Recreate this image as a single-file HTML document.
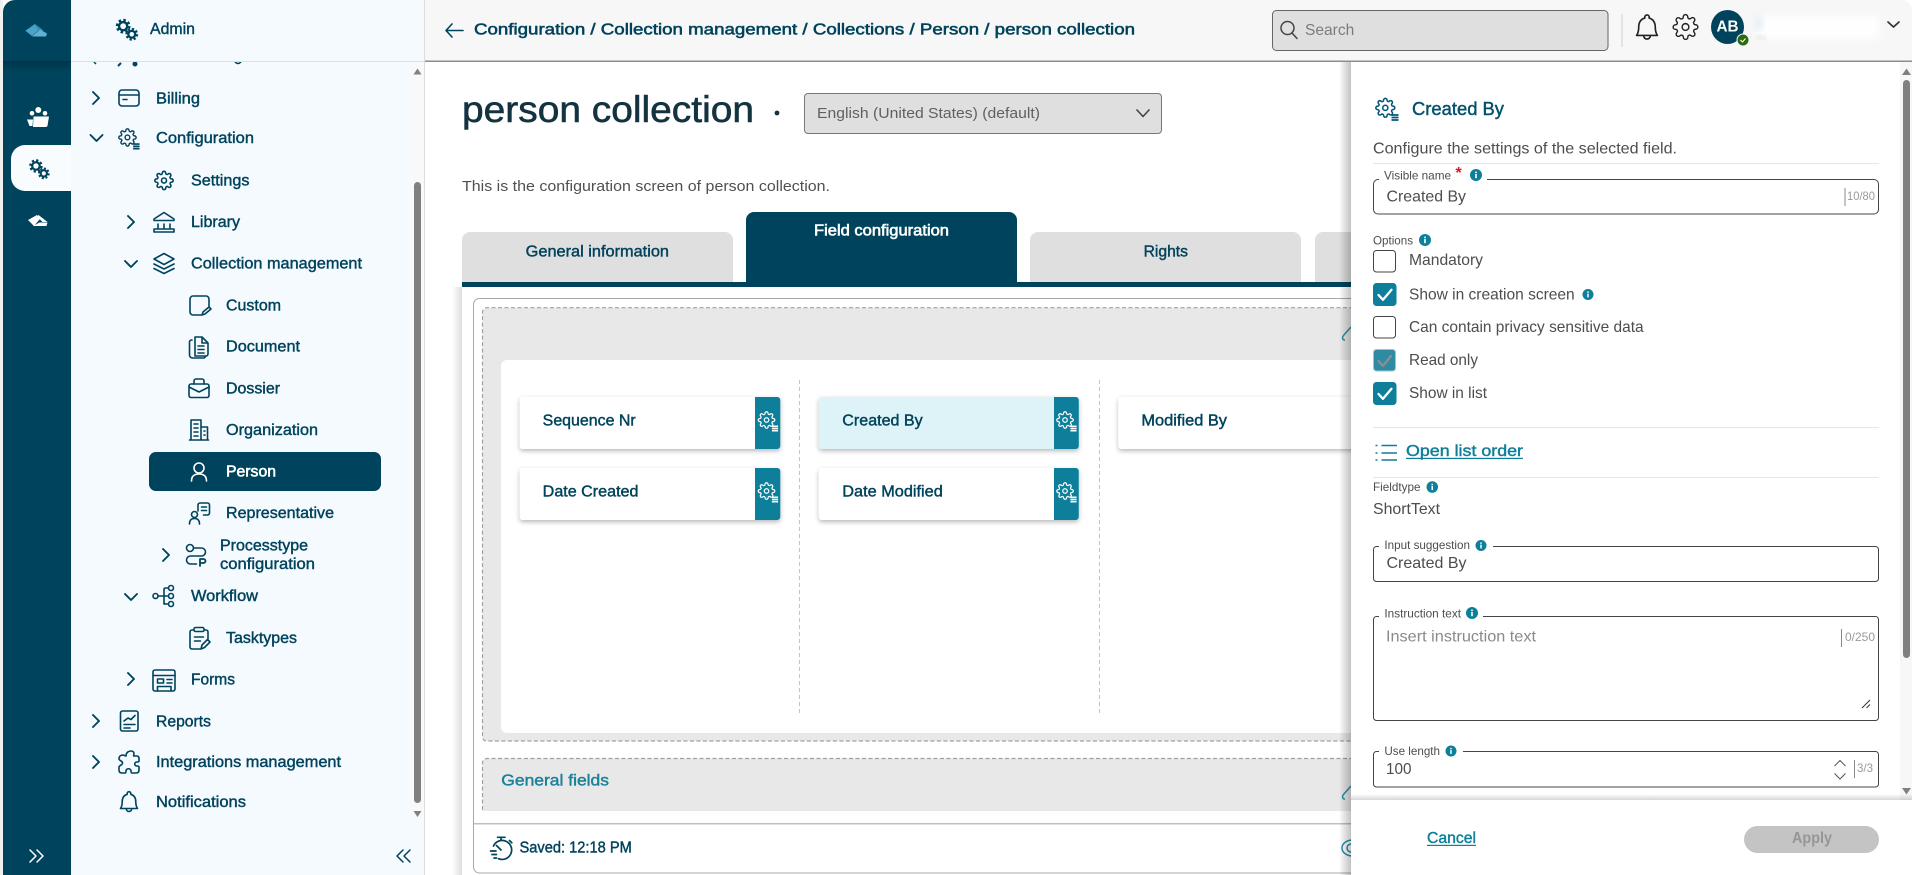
<!DOCTYPE html>
<html lang="en">
<head>
<meta charset="utf-8">
<title>person collection</title>
<style>
html,body{margin:0;padding:0;background:#fff;width:1915px;height:875px;overflow:hidden}
svg{display:block}
text{font-family:"Liberation Sans",sans-serif;white-space:pre}
.a{font-size:16px;fill:#00435c;stroke:#00435c;stroke-width:.42}
.w{font-size:16px;fill:#fff;stroke:#fff;stroke-width:.6}
.g{font-size:16px;fill:#4d4d4d}
.s{font-size:12px;fill:#4d4d4d}
.c{font-size:12px;fill:#9a9a9a}
.i{fill:none;stroke:#00435c;stroke-width:1.6;stroke-linecap:round;stroke-linejoin:round}
.ib{fill:none;stroke:#00435c;stroke-width:1.9;stroke-linecap:round;stroke-linejoin:round}
.bx{fill:#fff;stroke:#444;stroke-width:1}
</style>
</head>
<body>
<svg width="1915" height="875" viewBox="0 0 1915 875" xmlns="http://www.w3.org/2000/svg">
<defs>
<symbol id="gear" viewBox="0 0 24 24" overflow="visible">
<g fill="none" stroke-linecap="round" stroke-linejoin="round">
<circle cx="12" cy="12" r="3"/>
<path d="M19.4 15a1.65 1.65 0 00.33 1.82l.06.06a2 2 0 010 2.83 2 2 0 01-2.83 0l-.06-.06a1.65 1.65 0 00-1.82-.33 1.65 1.65 0 00-1 1.51V21a2 2 0 01-2 2 2 2 0 01-2-2v-.09A1.65 1.65 0 009 19.4a1.65 1.65 0 00-1.82.33l-.06.06a2 2 0 01-2.83 0 2 2 0 010-2.83l.06-.06a1.65 1.65 0 00.33-1.82 1.65 1.65 0 00-1.51-1H3a2 2 0 01-2-2 2 2 0 012-2h.09A1.65 1.65 0 004.6 9a1.65 1.65 0 00-.33-1.82l-.06-.06a2 2 0 010-2.83 2 2 0 012.83 0l.06.06a1.65 1.65 0 001.82.33H9a1.65 1.65 0 001-1.51V3a2 2 0 012-2 2 2 0 012 2v.09a1.65 1.65 0 001 1.51 1.65 1.65 0 001.82-.33l.06-.06a2 2 0 012.83 0 2 2 0 010 2.83l-.06.06a1.65 1.65 0 00-.33 1.82V9a1.65 1.65 0 001.51 1H21a2 2 0 012 2 2 2 0 01-2 2h-.09a1.65 1.65 0 00-1.51 1z"/>
</g>
</symbol>
<symbol id="cfg" viewBox="0 0 24 24" overflow="visible">
<g transform="scale(.86)"><use href="#gear" width="24" height="24"/></g>
<path d="M16.5 17.5h7M16.5 20h7M16.5 22.5h7" fill="none" stroke-width="1.8"/>
</symbol>
<symbol id="gears" viewBox="0 0 24 24" overflow="visible">
<g fill="none">
<circle cx="8.500" cy="8.500" r="4.300" stroke-width="2.500"/>
<circle cx="8.500" cy="8.500" r="6.400" stroke-width="2.600" stroke-dasharray="2.600 2.430"/>
<circle cx="17.500" cy="17" r="3.600" stroke-width="2.400"/>
<circle cx="17.500" cy="17" r="5.500" stroke-width="2.400" stroke-dasharray="2.300 2"/>
</g>
</symbol>
<symbol id="info" viewBox="0 0 12 12">
<circle cx="6" cy="6" r="6" fill="#0e7f9a"/>
<rect x="5.200" y="5" width="1.600" height="4.200" fill="#fff"/>
<rect x="5.200" y="2.600" width="1.600" height="1.600" fill="#fff"/>
</symbol>
<symbol id="bell" viewBox="0 0 18 22" overflow="visible">
<path fill="none" stroke-linecap="round" stroke-linejoin="round" d="M9 .7a1.800 1.800 0 0 0-1.800 1.800v.8C3.500 4.300 2.200 7 2.200 11c0 3.700-.7 5-1.700 6.500h17c-1-1.500-1.700-2.800-1.700-6.500 0-4-1.300-6.700-5-7.700v-.8A1.800 1.800 0 0 0 9 .7zM6.300 17.800a2.700 2.700 0 0 0 5.400 0"/>
</symbol>
<symbol id="chk" viewBox="0 0 24 23">
<rect x=".5" y=".5" width="22.500" height="22" rx="3" fill="#0e7f9a" stroke="#0e7f9a"/>
<path d="M5.500 12l4.500 4.800 8.500-10" fill="none" stroke="#fff" stroke-width="2.300" stroke-linecap="round" stroke-linejoin="round"/>
</symbol>
<linearGradient id="ps" x1="0" x2="1" y1="0" y2="0"><stop offset="0" stop-color="#000" stop-opacity="0"/><stop offset="1" stop-color="#000" stop-opacity=".24"/></linearGradient>
<linearGradient id="ls" x1="0" x2="1" y1="0" y2="0"><stop offset="0" stop-color="#000" stop-opacity="0"/><stop offset="1" stop-color="#000" stop-opacity=".13"/></linearGradient>
<linearGradient id="fs" x1="0" x2="0" y1="0" y2="1"><stop offset="0" stop-color="#000" stop-opacity="0"/><stop offset="1" stop-color="#000" stop-opacity=".16"/></linearGradient>
<linearGradient id="rs" x1="0" x2="0" y1="0" y2="1"><stop offset="0" stop-color="#000" stop-opacity=".22"/><stop offset="1" stop-color="#000" stop-opacity="0"/></linearGradient>
<filter id="cs" x="-10%" y="-20%" width="120%" height="150%"><feDropShadow dx="0" dy="2" stdDeviation="2.500" flood-color="#000" flood-opacity=".28"/></filter>
<filter id="bl" x="-10%" y="-50%" width="120%" height="200%"><feGaussianBlur stdDeviation="3"/></filter>
</defs>

<!-- base -->
<rect width="1915" height="875" fill="#fff"/>

<!-- main content -->
<text x="462" y="122" font-size="37" fill="#12333f" stroke="#12333f" stroke-width=".6" textLength="292" lengthAdjust="spacingAndGlyphs">person collection</text>
<circle cx="777" cy="113" r="2.400" fill="#12333f"/>
<rect x="804.500" y="93.500" width="357" height="40" rx="3.500" fill="#dfdfdf" stroke="#777"/>
<text x="817" y="118" class="g" style="font-size:15px;fill:#606060" textLength="223" lengthAdjust="spacingAndGlyphs">English (United States) (default)</text>
<path d="M1137 110l6 6.500 6-6.500" fill="none" stroke="#444" stroke-width="1.600" stroke-linecap="round" stroke-linejoin="round"/>
<text x="462" y="191" class="g" style="font-size:15px;fill:#505050" textLength="368" lengthAdjust="spacingAndGlyphs">This is the configuration screen of person collection.</text>

<!-- tabs -->
<path d="M462 282v-42a8 8 0 0 1 8-8h255a8 8 0 0 1 8 8v42z" fill="#dfdfdf"/>
<path d="M746 282v-62a8 8 0 0 1 8-8h255a8 8 0 0 1 8 8v62z" fill="#00435c"/>
<path d="M1030 282v-42a8 8 0 0 1 8-8h255a8 8 0 0 1 8 8v42z" fill="#dfdfdf"/>
<path d="M1315 282v-42a8 8 0 0 1 8-8h40v50z" fill="#dfdfdf"/>
<text x="525.700" y="256.700" class="a" style="font-size:15.500px" textLength="143.300" lengthAdjust="spacingAndGlyphs">General information</text>
<text x="814" y="235.700" class="w" style="font-size:15.500px" textLength="135" lengthAdjust="spacingAndGlyphs">Field configuration</text>
<text x="1143.600" y="256.700" class="a" style="font-size:15.500px" textLength="44.400" lengthAdjust="spacingAndGlyphs">Rights</text>
<rect x="452" y="287" width="10" height="588" fill="url(#ls)"/>
<rect x="462" y="282" width="900" height="5" fill="#00435c"/>

<!-- content box -->
<path d="M1360 298.500H479a6 6 0 0 0-5.500 6V867a6 6 0 0 0 6 6H1360" fill="#fff" stroke="#a8a8a8"/>
<path d="M1360 307.700H487a4.500 4.500 0 0 0-4.500 4.500V737a4 4 0 0 0 4 4H1360z" fill="#e8e8e8" stroke="#a0a0a0" stroke-width="1.200" stroke-dasharray="4 2.500"/>
<path d="M1360 360H507a6 6 0 0 0-6 6V727a6 6 0 0 0 6 6H1360z" fill="#fff"/>
<path d="M799.500 380V713M1099.500 380V713" stroke="#c4c4c4" stroke-dasharray="4 3" fill="none"/>

<g filter="url(#cs)"><rect x="519.700" y="397" width="260.600" height="52" rx="3" fill="#fff"/></g>
<path d="M755 397h22.300a3 3 0 0 1 3 3v46a3 3 0 0 1-3 3H755z" fill="#0e7f9a"/>
<use href="#cfg" x="757" y="411" width="22" height="21" stroke="#fff" stroke-width="1.600"/>
<text x="542.700" y="425.700" class="a" style="font-size:15.500px" textLength="93" lengthAdjust="spacingAndGlyphs">Sequence Nr</text>

<g filter="url(#cs)"><rect x="519.700" y="468" width="260.600" height="52" rx="3" fill="#fff"/></g>
<path d="M755 468h22.300a3 3 0 0 1 3 3v46a3 3 0 0 1-3 3H755z" fill="#0e7f9a"/>
<use href="#cfg" x="757" y="482" width="22" height="21" stroke="#fff" stroke-width="1.600"/>
<text x="542.700" y="496.700" class="a" style="font-size:15.500px" textLength="95.800" lengthAdjust="spacingAndGlyphs">Date Created</text>

<g filter="url(#cs)"><rect x="818.800" y="397" width="260" height="52" rx="3" fill="#def3f7"/></g>
<path d="M1054 397h21.800a3 3 0 0 1 3 3v46a3 3 0 0 1-3 3H1054z" fill="#0e7f9a"/>
<use href="#cfg" x="1055.500" y="411" width="22" height="21" stroke="#fff" stroke-width="1.600"/>
<text x="842.300" y="425.700" class="a" style="font-size:15.500px" textLength="80.400" lengthAdjust="spacingAndGlyphs">Created By</text>

<g filter="url(#cs)"><rect x="818.800" y="468" width="260" height="52" rx="3" fill="#fff"/></g>
<path d="M1054 468h21.800a3 3 0 0 1 3 3v46a3 3 0 0 1-3 3H1054z" fill="#0e7f9a"/>
<use href="#cfg" x="1055.500" y="482" width="22" height="21" stroke="#fff" stroke-width="1.600"/>
<text x="842.300" y="496.700" class="a" style="font-size:15.500px" textLength="100.500" lengthAdjust="spacingAndGlyphs">Date Modified</text>

<g filter="url(#cs)"><rect x="1118.400" y="397" width="270" height="52" rx="3" fill="#fff"/></g>
<text x="1141.400" y="425.700" class="a" style="font-size:15.500px" textLength="85.600" lengthAdjust="spacingAndGlyphs">Modified By</text>

<path d="M1343 336l8-9" stroke="#2b8ea6" stroke-width="1.500" fill="none"/>
<path d="M1343 336q-1.500 4 2 4" stroke="#2b8ea6" stroke-width="1.500" fill="none"/>

<!-- general fields -->
<path d="M1360 758.500H487a4.500 4.500 0 0 0-4.500 4.500V811H1360z" fill="#e8e8e8"/>
<path d="M1360 758.500H487a4.500 4.500 0 0 0-4.500 4.500V811" fill="none" stroke="#a0a0a0" stroke-width="1.200" stroke-dasharray="4 2.500"/>
<rect x="505" y="811" width="860" height="2" fill="#fff"/>
<text x="501.300" y="785.700" class="a" style="font-size:15.500px;fill:#1a8199;stroke:#1a8199" textLength="107.700" lengthAdjust="spacingAndGlyphs">General fields</text>
<path d="M1343 795l8-9" stroke="#2b8ea6" stroke-width="1.500" fill="none"/>
<path d="M1343 795q-1.500 4 2 4" stroke="#2b8ea6" stroke-width="1.500" fill="none"/>

<rect x="474" y="823" width="890" height="1.500" fill="#c0c0c0"/>
<g class="i" style="stroke-width:1.700">
<path d="M493.500 846a9.500 9.500 0 1 1 5 12.700M497.500 837.300h7.500M501 837.500v3M509.500 840.500l2.300 2.300M501 850l-4.500-4.500M490.500 851h5.500M492 854.500h4.500M494 858h2.500"/>
</g>
<text x="519.500" y="852.700" class="a" style="font-size:15.500px" textLength="112.300" lengthAdjust="spacingAndGlyphs">Saved: 12:18 PM</text>
<path d="M1351 840a12 8 0 0 0-9 8 12 8 0 0 0 9 8" stroke="#2b8ea6" stroke-width="1.500" fill="none"/>
<circle cx="1351" cy="848" r="4" fill="none" stroke="#2b8ea6" stroke-width="1.500"/>

<!-- header -->
<path d="M424 0H1902a10 10 0 0 1 10 10V61H424z" fill="#f7f7f7"/>
<rect x="424" y="60.500" width="1488" height="1.500" fill="#8c8c8c"/>
<path d="M463 30.500H446M452 24l-6 6.500 6 6.500" fill="none" stroke="#00435c" stroke-width="1.600" stroke-linecap="round" stroke-linejoin="round"/>
<text x="474" y="34.700" class="a" style="stroke-width:.55" textLength="661" lengthAdjust="spacingAndGlyphs">Configuration / Collection management / Collections / Person / person collection</text>
<rect x="1272.500" y="10.500" width="335.500" height="40" rx="4" fill="#dfdfdf" stroke="#666"/>
<circle cx="1287.500" cy="28" r="6.500" fill="none" stroke="#444" stroke-width="1.500"/>
<path d="M1292 33l5 5.500" stroke="#444" stroke-width="1.500" fill="none" stroke-linecap="round"/>
<text x="1305" y="35" class="g" style="fill:#7c7c7c" textLength="49.300" lengthAdjust="spacingAndGlyphs">Search</text>
<rect x="1621.500" y="14" width="1" height="33" fill="#cfcfcf"/>
<use href="#bell" x="1636" y="14" width="22" height="27" stroke="#222" stroke-width="1.350"/>
<use href="#gear" x="1672" y="13" width="27" height="28" stroke="#222" stroke-width="1.250"/>
<ellipse cx="1727.500" cy="27" rx="16.500" ry="17" fill="#00435c"/>
<text x="1716.500" y="31.700" font-size="16" font-weight="bold" fill="#fff" textLength="22" lengthAdjust="spacingAndGlyphs">AB</text>
<circle cx="1743" cy="40" r="6" fill="#2b6b10" stroke="#f7f7f7" stroke-width="1"/>
<path d="M1740.500 40l2 2 3-3.500" stroke="#fff" stroke-width="1.100" fill="none"/>
<rect x="1757" y="16" width="122" height="23" fill="#ffffff" opacity=".9" filter="url(#bl)"/>
<rect x="1754" y="16" width="10" height="14" fill="#e4eef8" opacity=".8" filter="url(#bl)"/>
<rect x="1756" y="36" width="10" height="3" fill="#c4d8b0" opacity=".7" filter="url(#bl)"/>
<path d="M1888 22l5.500 5 5.500-5" fill="none" stroke="#333" stroke-width="1.700" stroke-linecap="round" stroke-linejoin="round"/>

<!-- drawer -->
<rect x="1339" y="62" width="12" height="813" fill="url(#ps)"/>
<rect x="1351" y="62" width="561" height="813" fill="#fff"/>
<rect x="1900" y="62" width="12" height="738" fill="#f7f7f7"/>
<path d="M1906.500 68.500l4.500 6.500h-9z" fill="#808080"/>
<rect x="1903" y="80" width="7" height="578" rx="3.500" fill="#808080"/>
<path d="M1906.500 794.500l-4.500-6.500h9z" fill="#808080"/>

<use href="#cfg" x="1375" y="97" width="24" height="25" stroke="#00567a" stroke-width="1.800"/>
<text x="1412" y="115" class="a" style="font-size:18px;fill:#00506e;stroke:#00506e" textLength="92" lengthAdjust="spacingAndGlyphs">Created By</text>
<text x="1373" y="153.300" class="g" textLength="304" lengthAdjust="spacingAndGlyphs">Configure the settings of the selected field.</text>
<rect x="1373" y="163" width="506" height="1" fill="#e6e6e6"/>

<!-- visible name -->
<rect x="1373.500" y="179.500" width="505" height="34.500" rx="4.500" class="bx"/>
<rect x="1379" y="176" width="108" height="7" fill="#fff"/>
<text x="1384" y="179.300" class="s" textLength="67" lengthAdjust="spacingAndGlyphs">Visible name</text>
<text x="1455.500" y="178" font-size="16" fill="#e0112b" font-weight="bold">*</text>
<use href="#info" x="1470" y="169" width="12" height="12"/>
<text x="1386.500" y="201.300" class="g" textLength="79.500" lengthAdjust="spacingAndGlyphs">Created By</text>
<rect x="1844.500" y="188" width="1" height="18" fill="#888"/>
<text x="1847" y="200" class="c" textLength="28" lengthAdjust="spacingAndGlyphs">10/80</text>

<!-- options -->
<text x="1373" y="244.300" class="s" textLength="40" lengthAdjust="spacingAndGlyphs">Options</text>
<use href="#info" x="1419" y="234" width="12" height="12"/>
<rect x="1373.500" y="250.500" width="22" height="21.500" rx="3" class="bx"/>
<text x="1409" y="265" class="g" textLength="74" lengthAdjust="spacingAndGlyphs">Mandatory</text>
<use href="#chk" x="1373" y="283" width="24" height="23"/>
<text x="1409" y="299.300" class="g" textLength="165.700" lengthAdjust="spacingAndGlyphs">Show in creation screen</text>
<use href="#info" x="1582.500" y="289" width="11" height="11"/>
<rect x="1373.500" y="316.500" width="22" height="21.500" rx="3" class="bx"/>
<text x="1409" y="332" class="g" textLength="234.600" lengthAdjust="spacingAndGlyphs">Can contain privacy sensitive data</text>
<rect x="1373.500" y="349.500" width="22" height="21.500" rx="3" fill="#2f8ba1" stroke="#9cc5cf"/>
<path d="M1378.500 361l4.500 4.800 8-9.800" fill="none" stroke="#8b8f90" stroke-width="2.300" stroke-linecap="round" stroke-linejoin="round"/>
<text x="1409" y="364.900" class="g" textLength="69" lengthAdjust="spacingAndGlyphs">Read only</text>
<use href="#chk" x="1373" y="382" width="24" height="23"/>
<text x="1409" y="398" class="g" textLength="78" lengthAdjust="spacingAndGlyphs">Show in list</text>
<rect x="1373" y="427" width="506" height="1" fill="#e6e6e6"/>

<path d="M1381.500 445.500h15.500M1381.500 453h15.500M1381.500 460h15.500M1375.500 445.500h2M1375.500 453h2M1375.500 460h2" stroke="#0e7f9a" stroke-width="1.500" fill="none"/>
<text x="1406" y="456" class="a" style="fill:#0e7f9a;stroke:#0e7f9a" textLength="117" lengthAdjust="spacingAndGlyphs">Open list order</text>
<rect x="1406" y="457.800" width="117" height="1.200" fill="#0e7f9a"/>
<rect x="1373" y="477" width="506" height="1" fill="#e6e6e6"/>

<text x="1373" y="491" class="s" textLength="47.500" lengthAdjust="spacingAndGlyphs">Fieldtype</text>
<use href="#info" x="1426.500" y="481" width="11.500" height="12"/>
<text x="1373" y="514" class="g" textLength="67" lengthAdjust="spacingAndGlyphs">ShortText</text>

<rect x="1373.500" y="546.500" width="505" height="35" rx="3" class="bx"/>
<rect x="1379" y="543" width="114" height="7" fill="#fff"/>
<text x="1384.400" y="549" class="s" textLength="85.600" lengthAdjust="spacingAndGlyphs">Input suggestion</text>
<use href="#info" x="1475.500" y="540" width="11" height="11"/>
<text x="1386.500" y="568" class="g" textLength="80" lengthAdjust="spacingAndGlyphs">Created By</text>

<rect x="1373.500" y="616.500" width="505" height="104" rx="3" class="bx"/>
<rect x="1379" y="613" width="104" height="7" fill="#fff"/>
<text x="1384.400" y="617.300" class="s" textLength="76.600" lengthAdjust="spacingAndGlyphs">Instruction text</text>
<use href="#info" x="1466" y="607" width="12" height="12"/>
<text x="1386" y="641.300" class="g" style="fill:#8a8a8a" textLength="150" lengthAdjust="spacingAndGlyphs">Insert instruction text</text>
<rect x="1841" y="629" width="1" height="18" fill="#888"/>
<text x="1845" y="641" class="c" textLength="30" lengthAdjust="spacingAndGlyphs">0/250</text>
<path d="M1862 708l8-8M1866.500 708l3.500-3.500" stroke="#333" stroke-width="1" fill="none"/>

<rect x="1373.500" y="751.500" width="505" height="35.500" rx="3" class="bx"/>
<rect x="1379" y="748" width="84" height="7" fill="#fff"/>
<text x="1384.400" y="755" class="s" textLength="55.600" lengthAdjust="spacingAndGlyphs">Use length</text>
<use href="#info" x="1445.500" y="745" width="11" height="12"/>
<text x="1386" y="774" class="g" textLength="25.500" lengthAdjust="spacingAndGlyphs">100</text>
<path d="M1834.500 766l5.500-5.500 5.500 5.500M1834.500 773.500l5.500 5.500 5.500-5.500" fill="none" stroke="#555" stroke-width="1"/>
<rect x="1854" y="760" width="1" height="18" fill="#888"/>
<text x="1857" y="772" class="c" textLength="16" lengthAdjust="spacingAndGlyphs">3/3</text>

<!-- drawer footer -->
<rect x="1351" y="794" width="561" height="6" fill="url(#fs)"/>
<rect x="1351" y="800" width="561" height="75" fill="#fff"/>
<text x="1427" y="843" class="a" style="fill:#0e7f9a;stroke:#0e7f9a" textLength="49" lengthAdjust="spacingAndGlyphs">Cancel</text>
<rect x="1427" y="844.800" width="49" height="1.200" fill="#0e7f9a"/>
<rect x="1744" y="826" width="135" height="27" rx="13.500" fill="#c4c4c4"/>
<text x="1792" y="843" font-size="16" font-weight="bold" fill="#969696" textLength="40" lengthAdjust="spacingAndGlyphs">Apply</text>
<rect x="1912" y="62" width="3" height="813" fill="#fff"/>

<!-- sidebar -->
<rect x="71" y="0" width="353" height="875" fill="#f5faff"/>
<rect x="424" y="0" width="1" height="875" fill="#dedede"/>
<rect x="411" y="62" width="13" height="760" fill="#f7f9fb"/>
<path d="M417.500 68.500l4 6h-8z" fill="#808080"/>
<rect x="414" y="182" width="7" height="621" rx="3.500" fill="#808080"/>
<path d="M417.500 817l-4-6h8z" fill="#808080"/>

<!-- partially hidden item -->
<path d="M118 66l3-3" stroke="#00435c" stroke-width="2" fill="none"/>
<circle cx="135" cy="64" r="2.500" fill="#00435c"/>
<path d="M235 62q3 3 6 0M94 62l2 2" stroke="#00435c" stroke-width="1.500" fill="none"/>

<!-- sidebar top -->
<rect x="71" y="0" width="353" height="61" fill="#f5faff"/>
<rect x="71" y="61" width="353" height="1" fill="#cfe6ee"/>
<use href="#gears" x="115" y="18" width="23" height="23" stroke="#00435c"/>
<text x="150" y="34" class="a" textLength="45" lengthAdjust="spacingAndGlyphs">Admin</text>

<!-- chevrons -->
<g class="ib">
<path d="M93 92l6 6-6 6M93 715l6 6-6 6M93 756l6 6-6 6"/>
<path d="M128 216l6 6-6 6M128 673l6 6-6 6"/>
<path d="M163 549l6 6-6 6"/>
<path d="M90.500 135l6 6 6-6"/>
<path d="M125 261l6 6 6-6M125 594l6 6 6-6"/>
</g>

<!-- level items -->
<g class="i">
<rect x="119" y="90" width="20" height="16" rx="3"/><path d="M119 95h20M123 99.500h4"/>
</g>
<use href="#cfg" x="118" y="128" width="22" height="22" stroke="#00435c" stroke-width="1.800"/>
<use href="#gear" x="154" y="170" width="20" height="21" stroke="#00435c" stroke-width="1.900"/>
<g class="i">
<path d="M154 219l10-6.500 10 6.500v1.500h-20zM158 224v5M164 224v5M170 224v5M154 232h20v-3h-20z"/>
<path d="M164 253.500l10 5.500-10 5.500-10-5.500zM154 264l10 5 10-5M154 268.500l10 5 10-5"/>
<path d="M201 315h-8a3 3 0 0 1-3-3v-13a3 3 0 0 1 3-3h13a3 3 0 0 1 3 3v8M202 315l1-3 6-5 2 2-6 5z"/>
<path d="M195 337h7l6 6v11a2 2 0 0 1-2 2h-11zM202 337v6h6M192 340h-.500a2 2 0 0 0-2 2v13a3 3 0 0 0 3 3h11a2 2 0 0 0 2-2M198 346h6M198 349.500h6M198 353h6"/>
<rect x="189" y="384" width="20" height="13.500" rx="2"/><path d="M194 384v-3a2 2 0 0 1 2-2h6a2 2 0 0 1 2 2v3M189 387l10 5 10-5"/>
<path d="M191 440v-20h10v20M201 427h6.500v13M189.500 440h19M194 424h4M194 428h4M194 432h4M194 436h4M204 431h1M204 435h1"/>
<circle cx="194.500" cy="514.500" r="3"/><path d="M189.500 524c0-4 2-5.500 5-5.500s5 1.500 5 5.500M198 511v-6a2 2 0 0 1 2-2h7.500a2 2 0 0 1 2 2v8a2 2 0 0 1-2 2h-4M201.500 507h5M201.500 510.500h5"/>
<circle cx="190" cy="548" r="3.500"/><path d="M193.500 548h8a4 4 0 0 1 0 8h-11a4 4 0 0 0 0 8h6"/><path d="M200 566v-7h3.500a2 2 0 0 1 0 4H200" stroke-width="1.800"/>
<circle cx="155.500" cy="596" r="2.500"/><circle cx="171" cy="588" r="2.500"/><circle cx="171" cy="596" r="2.500"/><circle cx="171" cy="604" r="2.500"/><path d="M158 596h10.500M164 604v-14.500q0-1.500 1.500-1.500h3M164 602q0 2 1.500 2h3"/>
<path d="M193 630h-1a2 2 0 0 0-2 2v15a2 2 0 0 0 2 2h8M204.500 630h1.500a2 2 0 0 1 2 2v7M194.500 637h9M194.500 641h6M201 649l1-4 5.500-5.500 2.500 2.500-5.500 5.500z"/><rect x="194" y="627.500" width="10" height="4" rx="1.500"/>
<rect x="153" y="670" width="22" height="21" rx="2"/><path d="M153 675.500h22"/><rect x="157.500" y="679" width="6" height="4"/><path d="M167 679.500h5M167 683h5"/><path d="M157.500 691v-4.500h13.500v4.500"/>
<rect x="120.500" y="711" width="17.500" height="20" rx="2"/><path d="M124 721l4-3 3 1.500 4-4M124 724.500h11M124 728h6"/>
<path d="M126 756c0-3 2-5 5-5 2 0 3 1 3 3 0 1-1 2 0 2h3c1 0 2 1 2 2v3c0 1-1 1-2 1-3 0-3 4 0 4 1 0 2 0 2 1v3c0 2-1 3-3 3h-4c-1 0-1-1-1-2 0-3-5-3-5 0 0 1 0 2-1 2h-3c-2 0-3-1-3-3v-3c0-1 1-1 2-2 2-1 2-3 0-4-1-1-2-1-2-2 0-3 2-4 4-4z"/>
</g>
<use href="#bell" x="120" y="791" width="18" height="22" stroke="#00435c" stroke-width="1.600"/>

<rect x="149" y="452" width="232" height="39" rx="7" fill="#00435c"/>
<circle cx="199" cy="468" r="5" fill="none" stroke="#fff" stroke-width="1.600"/>
<path d="M191.500 481c0-5 3-7 7.500-7s7.500 2 7.500 7" fill="none" stroke="#fff" stroke-width="1.600" stroke-linecap="round"/>

<g transform="translate(0,-.4)">
<text x="156" y="104" class="a" textLength="44" lengthAdjust="spacingAndGlyphs">Billing</text>
<text x="156" y="143.300" class="a" textLength="98" lengthAdjust="spacingAndGlyphs">Configuration</text>
<text x="191" y="185.700" class="a" textLength="58.500" lengthAdjust="spacingAndGlyphs">Settings</text>
<text x="191" y="227.600" class="a" textLength="49" lengthAdjust="spacingAndGlyphs">Library</text>
<text x="191" y="268.700" class="a" textLength="171" lengthAdjust="spacingAndGlyphs">Collection management</text>
<text x="226" y="310.700" class="a" textLength="55" lengthAdjust="spacingAndGlyphs">Custom</text>
<text x="226" y="351.700" class="a" textLength="74" lengthAdjust="spacingAndGlyphs">Document</text>
<text x="226" y="393.700" class="a" textLength="54" lengthAdjust="spacingAndGlyphs">Dossier</text>
<text x="226" y="435.300" class="a" textLength="92" lengthAdjust="spacingAndGlyphs">Organization</text>
<text x="226" y="476.700" class="w" textLength="50" lengthAdjust="spacingAndGlyphs">Person</text>
<text x="226" y="518.300" class="a" textLength="108" lengthAdjust="spacingAndGlyphs">Representative</text>
<text x="220" y="550.700" class="a" textLength="88" lengthAdjust="spacingAndGlyphs">Processtype</text>
<text x="220" y="569.300" class="a" textLength="95" lengthAdjust="spacingAndGlyphs">configuration</text>
<text x="191" y="601.300" class="a" textLength="67" lengthAdjust="spacingAndGlyphs">Workflow</text>
<text x="226" y="643.300" class="a" textLength="71" lengthAdjust="spacingAndGlyphs">Tasktypes</text>
<text x="191" y="684.700" class="a" textLength="44" lengthAdjust="spacingAndGlyphs">Forms</text>
<text x="156" y="726.700" class="a" textLength="55" lengthAdjust="spacingAndGlyphs">Reports</text>
<text x="156" y="767.300" class="a" textLength="185" lengthAdjust="spacingAndGlyphs">Integrations management</text>
<text x="156" y="807.300" class="a" textLength="90" lengthAdjust="spacingAndGlyphs">Notifications</text>
</g>
<path d="M403 850l-6 6 6 6M410 850l-6 6 6 6" fill="none" stroke="#00435c" stroke-width="1.500" stroke-linecap="round" stroke-linejoin="round"/>

<!-- rail -->
<rect x="0" y="0" width="3" height="875" fill="#f0f0f0"/>
<path d="M3 875V12A12 12 0 0 1 15 0H71V875z" fill="#00435c"/>
<rect x="3" y="61" width="68" height="10" fill="url(#rs)"/>
<path d="M71 145H25a14 14 0 0 0-14 14v18a14 14 0 0 0 14 14H71z" fill="#f8fcff"/>
<!-- logo -->
<path d="M25.300 30.700L35 24l5 5-8 7z" fill="#4aa3c8"/>
<path d="M36.500 25l7 5.500-3.500 1-4.500-5z" fill="#2f8fb3"/>
<path d="M40 29.500l7 4-1 3H32z" fill="#5fb2d0"/>
<!-- people -->
<g fill="#fff">
<circle cx="38.300" cy="110" r="3"/>
<circle cx="32" cy="113.300" r="2.300"/>
<circle cx="45" cy="113.300" r="2.300"/>
<path d="M33.500 116.500h15.500l-1.500 9.300a1.500 1.500 0 0 1-1.500 1.200H33z"/>
<path d="M27 119.500h6l-.5 6.500h-3z"/>
</g>
<use href="#gears" x="28" y="158.500" width="22" height="21" stroke="#00435c"/>
<!-- logo white -->
<path d="M28 220l9-5 3 4-6 7z" fill="#fff"/>
<path d="M38.500 215l9 7-5 0-5.500-5.500z" fill="#fff"/>
<path d="M39.500 222.500h8l-1 3.500H33z" fill="#fff"/>
<path d="M30 850l6 6-6 6M37 850l6 6-6 6" fill="none" stroke="#fff" stroke-width="1.500" stroke-linecap="round" stroke-linejoin="round"/>
</svg>
</body>
</html>
